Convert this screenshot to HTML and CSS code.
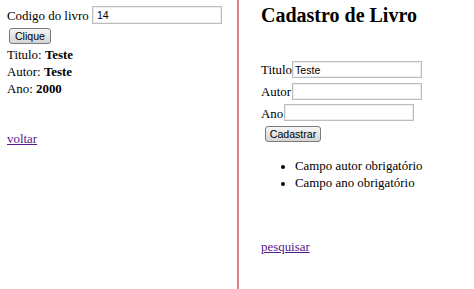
FILE: index.html
```html
<!DOCTYPE html>
<html lang="pt">
<head>
<meta charset="utf-8">
<title>Cadastro de Livro</title>
<link rel="stylesheet" href="styles.css">
</head>
<body>
<div class="page">
  <div class="pane pane-left">
    <div class="search-row">
      <span class="label">Codigo do livro </span><input class="field field-code" type="text" value="14">
    </div>
    <button class="btn btn-clique" type="button">Clique</button>
    <div class="info">
      <div class="line">Titulo: <b>Teste</b></div>
      <div class="line">Autor: <b>Teste</b></div>
      <div class="line">Ano: <b>2000</b></div>
    </div>
    <div class="line link-line"><a href="#">voltar</a></div>
  </div>
  <div class="pane pane-right">
    <h1 class="title">Cadastro de Livro</h1>
    <form class="form">
      <div class="form-row"><span class="label">Titulo</span><input class="field field-titulo" type="text" value="Teste"></div>
      <div class="form-row"><span class="label">Autor</span><input class="field field-autor" type="text"></div>
      <div class="form-row"><span class="label">Ano</span><input class="field field-ano" type="text"></div>
      <button class="btn btn-cadastrar" type="button">Cadastrar</button>
    </form>
    <ul class="errors">
      <li class="line">Campo autor obrigatório</li>
      <li class="line">Campo ano obrigatório</li>
    </ul>
    <div class="line link-line link-right"><a href="#">pesquisar</a></div>
  </div>
</div>
</body>
</html>
```

FILE: styles.css
```css
html, body {
  margin: 0;
  padding: 0;
  background: #ffffff;
}

body {
  font-family: "Liberation Serif", "Times New Roman", serif;
  font-size: 12.9px;
  color: #000000;
}

.page {
  display: flex;
  height: 289px;
}

.pane-left {
  width: 239px;
  border-right: 2px solid #e08585;
  padding-left: 7px;
  box-sizing: border-box;
}

.pane-right {
  flex: 1;
  padding-left: 22px;
}

.line {
  line-height: 16.7px;
}

.search-row {
  display: flex;
  align-items: center;
  margin-top: 6px;
}

.label {
  white-space: pre;
  padding-top: 2.5px;
}

.field {
  box-sizing: border-box;
  height: 17px;
  width: 130px;
  margin: 0;
  padding: 0 0 0 2px;
  border: 1px solid #bdbdbd;
  box-shadow: inset 0 0 0 1px #ececec;
  font-family: "Liberation Sans", Arial, sans-serif;
  font-size: 10.6px;
  color: #000000;
  background: #ffffff;
  outline: none;
}

.field-code {
  height: 18px;
  padding-left: 4px;
}

.field-autor {
  margin-left: 1px;
}

.field-ano {
  margin-left: 1px;
}

.btn {
  display: block;
  box-sizing: border-box;
  height: 16px;
  padding: 0;
  border: 1px solid #7a7a7a;
  border-radius: 3px;
  background: linear-gradient(#f7f7f7, #e4e4e4 50%, #d6d6d6);
  font-family: "Liberation Sans", Arial, sans-serif;
  font-size: 10.6px;
  line-height: 14px;
  color: #000000;
}

.btn-clique {
  width: 42px;
  margin: 4px 0 0 2px;
}

.info {
  margin-top: 3.4px;
}

.link-line {
  margin-top: 33px;
}

a {
  color: #551a8b;
  text-decoration: underline;
}

.title {
  margin: 0;
  padding-top: 3px;
  font-size: 20px;
  line-height: 24px;
  font-weight: bold;
}

.form {
  margin: 34px 0 0 0;
}

.form-row {
  display: flex;
  align-items: center;
  height: 17px;
  margin-bottom: 4.7px;
}

.btn-cadastrar {
  width: 56px;
  margin: 1px 0 0 4px;
}

.errors {
  margin: 16px 0 0 0;
  padding-left: 34px;
  list-style: disc;
}

.link-right {
  margin-top: 48px;
}
```
